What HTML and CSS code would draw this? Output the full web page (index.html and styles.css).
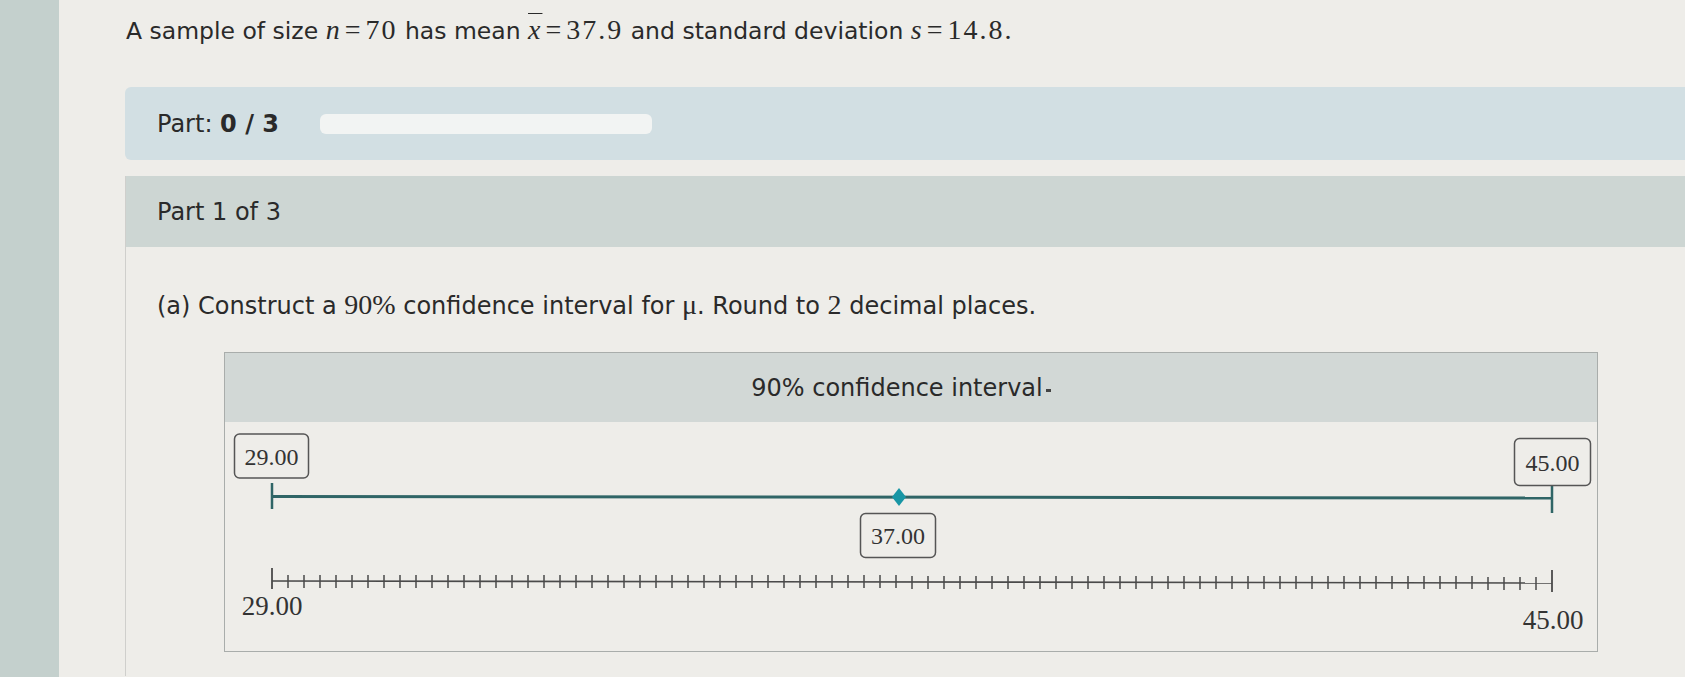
FILE: index.html
```html
<!DOCTYPE html>
<html lang="en">
<head>
<meta charset="utf-8">
<title>Confidence interval</title>
<link rel="stylesheet" href="styles.css">
</head>
<body>
<div class="app">
  <aside class="rail"></aside>
  <main class="main">
    <p class="stem">A sample of size <span class="m"><i>n</i><span class="eq">=</span>70</span> has mean <span class="m"><i class="bar">x</i><span class="eq">=</span>37.9</span> and standard deviation <span class="m"><i>s</i><span class="eq">=</span>14.8.</span></p>

    <div class="progress">
      <span class="progress-label">Part: <b>0 / 3</b></span>
      <span class="track"></span>
    </div>

    <section class="part">
      <header class="part-head">Part 1 of 3</header>
      <div class="part-body">
        <p class="prompt">(a) Construct a <span class="m">90%</span> confidence interval for <span class="m">μ</span>. Round to <span class="m">2</span> decimal places.</p>

        <div class="figure">
          <div class="figure-head">90% confidence interval<span class="dash"></span></div>
          <svg class="plot" width="1372" height="229" viewBox="0 0 1372 229">
            <!-- interval with end caps and point estimate -->
            <line x1="47" y1="74.5" x2="1327" y2="76" class="ci"/>
            <line x1="47" y1="61" x2="47" y2="87" class="cap"/>
            <line x1="1327" y1="64" x2="1327" y2="91" class="cap"/>
            <polygon points="674,66 681,75 674,84 667,75" class="est"/>

            <rect x="9.5" y="12" width="74" height="44" rx="5" class="tag"/>
            <text x="46.5" y="42.5" class="tag-text">29.00</text>
            <rect x="1289.5" y="16.5" width="76" height="47" rx="5" class="tag"/>
            <text x="1327.5" y="49" class="tag-text">45.00</text>
            <rect x="635.5" y="91.5" width="75" height="44" rx="5" class="tag"/>
            <text x="673" y="122" class="tag-text">37.00</text>

            <!-- axis, one tick every 0.2 -->
            <line x1="47" y1="159" x2="1327" y2="161" class="axis"/>
            <path class="ticks" d="M63 153v13M79 153v13M95 153v13M111 153v13M127 153v13M143 153v13M159 153v13M175 153v13M191 153v13M207 153v13M223 153v13M239 153v13M255 153v13M271 153v13M287 153v13M303 153v13M319 153v13M335 153v13M351 153v13M367 153v13M383 153v13M399 153v13M415 153v13M431 153v13M447 153v13M463 153v13M479 153v13M495 153v13M511 153v13M527 153v13M543 153v13M559 153v13M575 153v13M591 153v13M607 153v13M623 153v13M639 153v13M655 153v13M671 153v13M687 154v13M703 154v13M719 154v13M735 154v13M751 154v13M767 154v13M783 154v13M799 154v13M815 154v13M831 154v13M847 154v13M863 154v13M879 154v13M895 154v13M911 154v13M927 154v13M943 154v13M959 154v13M975 154v13M991 154v13M1007 154v13M1023 154v13M1039 154v13M1055 154v13M1071 154v13M1087 154v13M1103 154v13M1119 154v13M1135 154v13M1151 154v13M1167 154v13M1183 154v13M1199 154v13M1215 154v13M1231 154v13M1247 154v13M1263 155v13M1279 155v13M1295 155v13M1311 155v13"/>
            <line x1="47" y1="146" x2="47" y2="167" class="axis-end"/>
            <line x1="1327" y1="148" x2="1327" y2="170" class="axis-end"/>
            <text x="47" y="193" class="axis-text">29.00</text>
            <text x="1328" y="207" class="axis-text">45.00</text>
          </svg>
        </div>
      </div>
    </section>
  </main>
</div>
</body>
</html>
```

FILE: styles.css
```css
* {
  box-sizing: border-box;
}

html, body {
  margin: 0;
  height: 100%;
}

body {
  background: #eeede9;
  color: #2a2a2a;
  font-family: "DejaVu Sans", Verdana, sans-serif;
  font-size: 24px;
  overflow: hidden;
}

.app {
  display: flex;
  min-height: 100%;
}

.rail {
  flex: 0 0 59px;
  background: #c4d0cd;
}

.main {
  flex: 1;
  padding-left: 66px;
}

.stem {
  margin: 0;
  padding: 14px 0 0 1px;
  font-size: 23.5px;
  line-height: 32px;
}

.m {
  font-family: "Liberation Serif", "Times New Roman", serif;
  font-size: 28px;
}

.stem .m {
  letter-spacing: 2px;
}

.m i {
  font-style: italic;
  padding-right: 1px;
}

.eq {
  padding: 0 3px 0 2px;
}

.bar {
  text-decoration: overline;
  text-decoration-thickness: 1px;
}

.progress {
  margin-top: 40px;
  height: 73px;
  display: flex;
  align-items: center;
  padding-left: 32px;
  background: #d2dfe3;
  border-radius: 6px 0 0 6px;
}

.progress-label b {
  font-weight: bold;
}

.track {
  display: block;
  width: 332px;
  height: 20px;
  margin-left: 41px;
  background: #f2f4f3;
  border-radius: 6px;
}

.part {
  margin-top: 16px;
  border-left: 1px solid #cfcfcc;
  min-height: 500px;
}

.part-head {
  height: 71px;
  display: flex;
  align-items: center;
  padding-left: 31px;
  background: #cdd6d3;
}

.part-body {
  padding: 42px 0 0 31px;
}

.prompt {
  margin: 0;
  line-height: 32px;
}

.figure {
  margin: 30px 0 0 67px;
  width: 1374px;
  border: 1px solid #a9adab;
}

.figure-head {
  height: 69px;
  display: flex;
  align-items: center;
  justify-content: center;
  padding-right: 20px;
  background: #d2d8d6;
}

.dash {
  display: inline-block;
  width: 5px;
  height: 3px;
  margin: 6px 0 0 3px;
  background: #444;
}

.plot {
  display: block;
}

.ci {
  stroke: #2f6566;
  stroke-width: 3;
}

.cap {
  stroke: #2f6566;
  stroke-width: 2.5;
}

.est {
  fill: #1896a5;
}

.tag {
  fill: none;
  stroke: #555;
  stroke-width: 1.5;
}

.tag-text,
.axis-text {
  font-family: "Liberation Serif", "Times New Roman", serif;
  fill: #333;
  text-anchor: middle;
}

.tag-text {
  font-size: 24px;
}

.axis-text {
  font-size: 27px;
}

.axis {
  stroke: #4a4a4a;
  stroke-width: 1.6;
}

.ticks {
  stroke: #4a4a4a;
  stroke-width: 1.5;
}

.axis-end {
  stroke: #4a4a4a;
  stroke-width: 1.8;
}
```
